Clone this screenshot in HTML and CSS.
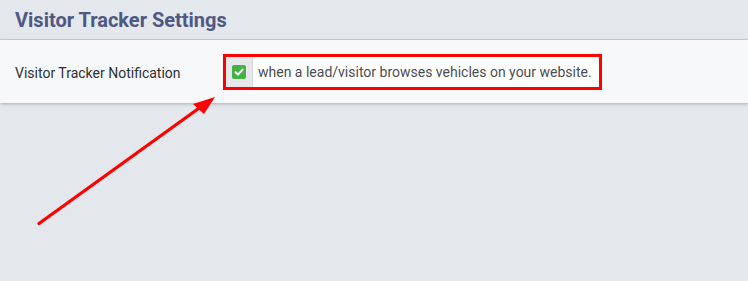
FILE: index.html
```html
<!DOCTYPE html>
<html>
<head>
<meta charset="utf-8">
<link rel="stylesheet" href="styles.css">
</head>
<body>
<div class="page">
  <header class="header">
    <h1 class="title">Visitor Tracker Settings</h1>
  </header>
  <section class="panel">
    <div class="row">
      <label class="label">Visitor Tracker Notification</label>
      <div class="highlight">
        <div class="input-group">
          <span class="addon">
            <span class="check">
              <svg width="14" height="14" viewBox="0 0 14 14"><path d="M3.5 7.2 L6 9.6 L10.6 4.6" fill="none" stroke="#fff" stroke-width="2" stroke-linecap="round" stroke-linejoin="round"/></svg>
            </span>
          </span>
          <span class="field">when a lead/visitor browses vehicles on your website.</span>
        </div>
      </div>
    </div>
  </section>
  <svg class="arrow" width="748" height="281" viewBox="0 0 748 281">
    <line x1="39" y1="223.5" x2="202" y2="106" stroke="#ff0000" stroke-width="3.2" stroke-linecap="round"/>
    <polygon points="215,97 193,104 204,114" fill="#ff0000"/>
  </svg>
</div>
</body>
</html>
```
FILE: styles.css
```css
html, body {
  margin: 0;
  padding: 0;
}
body {
  background: #e4e7ec;
  font-family: Roboto, "Liberation Sans", Arial, sans-serif;
  width: 748px;
  height: 281px;
  overflow: hidden;
}
.page {
  position: relative;
  width: 748px;
  height: 281px;
}
.header {
  height: 39px;
  border-bottom: 1px solid #c9ced8;
  display: flex;
  align-items: center;
  padding-left: 15px;
}
.title {
  margin: 0;
  font-size: 20px;
  font-weight: 700;
  color: #4e5983;
  line-height: 1;
  padding-bottom: 0;
}
.panel {
  background: #f7f8fa;
  height: 63px;
  box-shadow: 0 1px 3px rgba(60, 70, 90, 0.35);
}
.row {
  display: flex;
  align-items: center;
  box-sizing: border-box;
  height: 63px;
  padding-top: 2px;
  padding-left: 15px;
}
.label {
  width: 208px;
  font-size: 14px;
  color: #2e3033;
}
.highlight {
  border: 3px solid #ff0000;
  padding: 0;
  margin-top: -1px;
}
.input-group {
  display: flex;
  height: 30px;
  width: 373px;
  background: #ffffff;
}
.addon {
  width: 26px;
  background: #e6e8ec;
  border-right: 1px solid #d3d6dc;
  display: flex;
  align-items: center;
  justify-content: center;
}
.check {
  width: 14px;
  height: 14px;
  background: #44b244;
  border-radius: 2px;
  display: flex;
}
.field {
  display: flex;
  align-items: center;
  padding-left: 5px;
  font-size: 14px;
  color: #4a4d52;
}
.arrow {
  position: absolute;
  left: 0;
  top: 0;
  pointer-events: none;
}
```
